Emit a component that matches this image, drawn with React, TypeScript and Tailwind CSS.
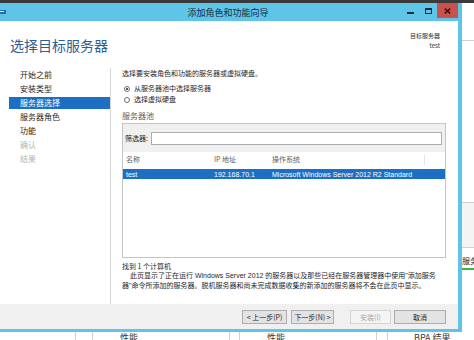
import React from "react";

const navItems = [
  { label: "开始之前", state: "normal" },
  { label: "安装类型", state: "normal" },
  { label: "服务器选择", state: "active" },
  { label: "服务器角色", state: "normal" },
  { label: "功能", state: "normal" },
  { label: "确认", state: "disabled" },
  { label: "结果", state: "disabled" },
];

function TitleBar() {
  return (
    <div className="h-[18px] bg-[#5ec5e9] flex items-start shrink-0">
      {/* app icon */}
      <div className="w-[6px] h-[18px] flex items-center">
        <svg width="6" height="6" viewBox="0 0 6 6">
          <rect x="0" y="1" width="6" height="4" fill="#2a6aa8" />
          <rect x="0" y="2" width="4" height="1" fill="#e8f4fb" />
        </svg>
      </div>
      <div className="ml-[49px] flex-1 h-[18px] flex items-center justify-center text-[9px] leading-none text-[#1b2b36]">
        添加角色和功能向导
      </div>
      <div className="flex h-[15px]">
        <div className="w-[18px] h-[15px] flex items-end justify-center pb-[4px]">
          <div className="w-[7px] h-[2px] bg-[#1b2b36]" />
        </div>
        <div className="w-[18px] h-[15px] flex items-center justify-center">
          <div className="w-[7px] h-[6px] border border-t-2 border-[#1b2b36]" />
        </div>
        <div className="w-[21px] h-[15px] bg-[#c9504c] flex items-center justify-center">
          <svg width="7" height="6" viewBox="0 0 7 6">
            <path d="M0.8 0.6 L6.2 5.4 M6.2 0.6 L0.8 5.4" stroke="#3a1614" strokeWidth="1.6" />
          </svg>
        </div>
      </div>
    </div>
  );
}

function Nav() {
  return (
    <div className="w-[111px] shrink-0 border-r border-[#d6d6d6] pl-[9px] pt-[1px] flex flex-col gap-[2px]">
      {navItems.map((item) => (
        <div
          key={item.label}
          className={
            item.state === "active"
              ? "h-[12px] pl-[11px] flex items-center text-[8px] leading-none bg-[#1c6fc3] text-white"
              : item.state === "disabled"
              ? "h-[12px] pl-[11px] flex items-center text-[8px] leading-none text-[#b4b4b4]"
              : "h-[12px] pl-[11px] flex items-center text-[8px] leading-none text-[#262626]"
          }
        >
          {item.label}
        </div>
      ))}
    </div>
  );
}

function Radio({ checked, label }: { checked?: boolean; label: string }) {
  return (
    <div className="h-[11px] flex items-center gap-[4px] pl-[2px]">
      <div className="w-[6px] h-[6px] rounded-full border border-[#6e6e6e] bg-white flex items-center justify-center">
        {checked && <div className="w-[2px] h-[2px] rounded-full bg-[#1f1f1f]" />}
      </div>
      <span className="text-[7px] leading-none text-[#262626]">{label}</span>
    </div>
  );
}

function ServerPool() {
  return (
    <div className="mt-[2px] h-[135px] border border-[#c4c4c4] flex flex-col">
      <div className="h-[28px] bg-[#f0f0f0] pt-[8px] pl-[2px] pr-[3px] flex items-start">
        <span className="w-[26px] h-[13px] flex items-center text-[7px] leading-none text-[#262626]">筛选器:</span>
        <div className="flex-1 h-[13px] border border-[#abadb3] bg-white" />
      </div>
      <div className="flex-1 bg-white flex flex-col">
        <div className="h-[15px] flex items-center pl-[3px] text-[7px] leading-none text-[#5c5c5c]">
          <span className="w-[88px]">名称</span>
          <span className="w-[58px]">IP 地址</span>
          <span className="flex-1">操作系统</span>
          <div className="w-px h-[10px] bg-[#e6e6e6] mr-[20px]" />
        </div>
        <div className="mt-[2px] h-[10px] bg-[#1c6fc3] flex items-center pl-[3px] text-[7px] leading-none text-white font-['Liberation_Sans','Noto_Sans_CJK_SC',sans-serif]">
          <span className="w-[88px]">test</span>
          <span className="w-[58px]">192.168.70.1</span>
          <span className="flex-1">Microsoft Windows Server 2012 R2 Standard</span>
        </div>
      </div>
    </div>
  );
}

function Content() {
  return (
    <div className="flex-1 pl-[11px] pr-[12px] flex flex-col">
      <div className="h-[10px] flex items-center text-[7px] leading-none text-[#262626]">
        选择要安装角色和功能的服务器或虚拟硬盘。
      </div>
      <div className="mt-[5px]">
        <Radio checked label="从服务器池中选择服务器" />
        <Radio label="选择虚拟硬盘" />
      </div>
      <div className="mt-[6px] h-[10px] flex items-center text-[8px] leading-none text-[#5c5c5c]">服务器池</div>
      <ServerPool />
      <div className="mt-[3px] h-[10px] flex items-center text-[7px] leading-none text-[#262626]">找到 1 个计算机</div>
      <p className="text-[7px] leading-[10px] text-[#262626] indent-[8px] whitespace-nowrap font-['Liberation_Sans','Noto_Sans_CJK_SC',sans-serif]">
        此页显示了正在运行 Windows Server 2012 的服务器以及那些已经在服务器管理器中使用"添加服务
        <br />
        器"命令所添加的服务器。脱机服务器和尚未完成数据收集的新添加的服务器将不会在此页中显示。
      </p>
    </div>
  );
}

function Footer() {
  const btn = "h-[14px] border border-[#adadad] bg-[#e3e3e3] flex items-center justify-center text-[7px] leading-none text-[#262626]";
  return (
    <div className="h-[25px] shrink-0 bg-[#f0f0f0] pt-[6px] pl-[242px] flex items-start">
      <div className={`${btn} w-[45px]`}>&lt; 上一步(P)</div>
      <div className={`${btn} w-[43px] ml-[4px]`}>下一步(N) &gt;</div>
      <div className="h-[14px] w-[41px] ml-[16px] border border-[#d4d4d4] bg-[#f4f4f4] flex items-center justify-center text-[7px] leading-none text-[#a8a8a8]">
        安装(I)
      </div>
      <div className={`${btn} w-[52px] ml-[3px]`}>取消</div>
    </div>
  );
}

export default function App() {
  return (
    <div className="w-[474px] h-[340px] overflow-hidden bg-white flex flex-col font-['Noto_Sans_CJK_SC','Noto_Sans',sans-serif]">
      <div className="h-[3px] shrink-0 bg-[#3a3a3a]" />
      <div className="h-[329px] shrink-0 flex">
        {/* wizard window */}
        <div className="w-[462px] shrink-0 flex flex-col border-r-4 border-b-[3px] border-[#5ec5e9]">
          <TitleBar />
          <div className="flex-1 bg-white flex flex-col">
            <div className="h-[47px] shrink-0 flex justify-between">
              <div className="pl-[10px] pt-[15px] text-[14px] leading-[18px] text-[#2c5e91]">选择目标服务器</div>
              <div className="pr-[18px] pt-[10px] flex flex-col items-end text-[6px] leading-[10px] text-[#303030]">
                <span>目标服务器</span>
                <span>test</span>
              </div>
            </div>
            <div className="flex-1 flex">
              <Nav />
              <Content />
            </div>
            <Footer />
          </div>
        </div>
        {/* server manager behind */}
        <div className="flex-1 bg-white flex flex-col">
          <div className="h-[38px] border-b border-[#d0d0d0]" />
          <div className="h-[161px]" />
          <div className="h-[46px] bg-[#f4f4f4] border-t border-b border-[#cfcfcf]" />
          <div className="h-[20px] pt-[9px] overflow-hidden text-[8px] leading-[8px] text-[#262626] whitespace-nowrap">服务</div>
          <div className="h-[2px] bg-[#39b54a]" />
        </div>
      </div>
      <div className="h-[8px] shrink-0 bg-white flex overflow-hidden text-[9px] leading-[12px] text-[#3a3a3a]">
        <div className="w-[76px] border-r border-[#cfcfcf]" />
        <div className="w-[17px] border-r border-[#cfcfcf]" />
        <div className="w-[137px] border-r border-[#cfcfcf] pl-[27px]">性能</div>
        <div className="w-[10px] border-r border-[#cfcfcf]" />
        <div className="w-[137px] border-r border-[#cfcfcf] pl-[27px]">性能</div>
        <div className="w-[11px] border-r border-[#cfcfcf]" />
        <div className="flex-1 pl-[26px]">BPA 结果</div>
      </div>
    </div>
  );
}
